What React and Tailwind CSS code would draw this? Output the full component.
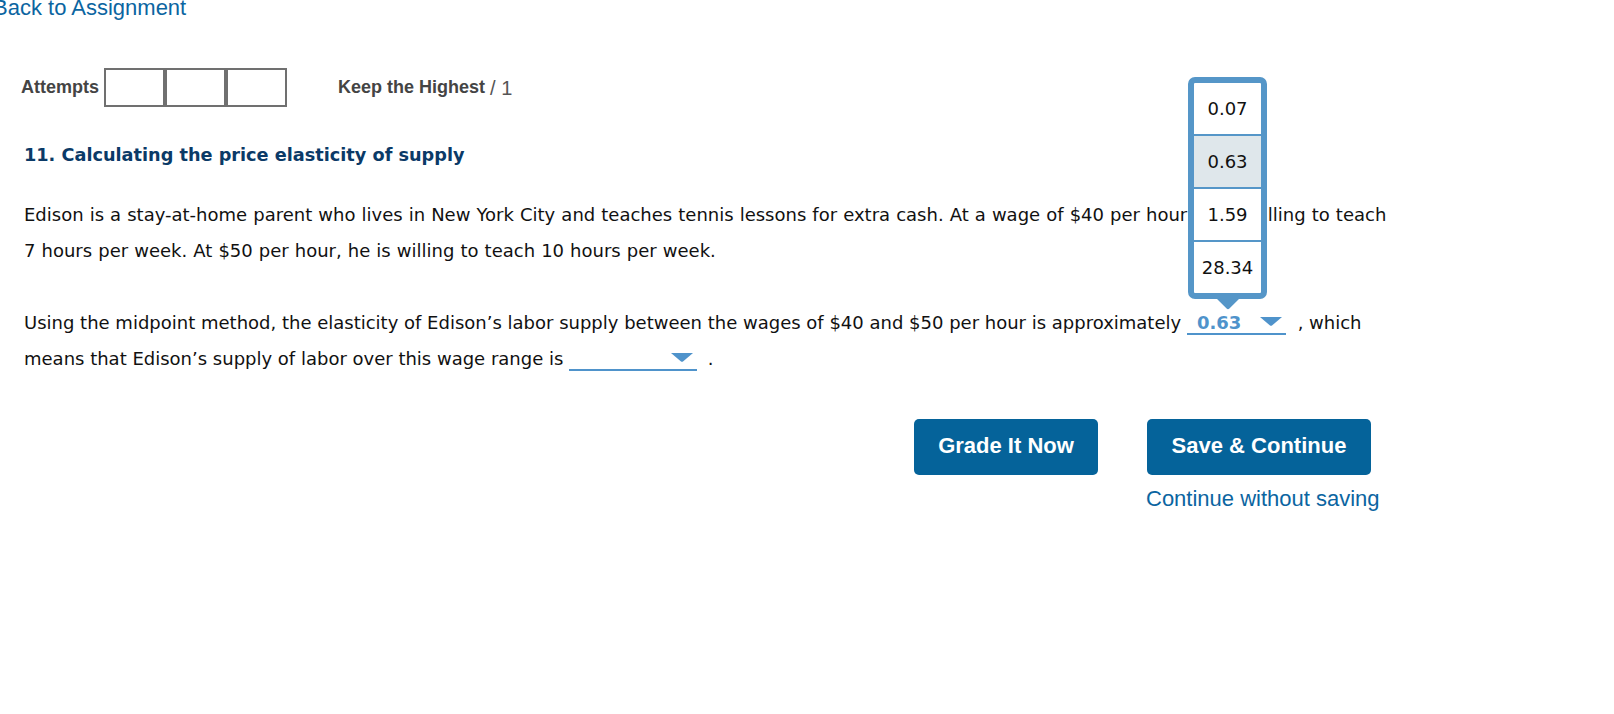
import React from "react";

const sans = "font-['Liberation_Sans',Arial,sans-serif]";
const body = "font-['DejaVu_Sans',Verdana,sans-serif]";

function Arrow() {
  return (
    <svg width="22" height="9" viewBox="0 0 22 9" className="mb-[4px] shrink-0">
      <path d="M0 0 H22 L12 8.4 Q11 9.2 10 8.4 Z" fill="#4f93cb" />
    </svg>
  );
}

function Dropdown({ value, width }) {
  return (
    <span
      className={`inline-flex items-center justify-between ${width} h-[22px] border-b-2 border-[#4f93cb] pl-[10px] pr-[4px] leading-[20px]`}
    >
      <span className="font-bold text-[#4f93cb]">{value || "\u00A0"}</span>
      <Arrow />
    </span>
  );
}

export default function App() {
  const options = ["0.07", "0.63", "1.59", "28.34"];
  return (
    <div className={`relative w-[1614px] h-[714px] overflow-hidden bg-white ${body}`}>
      <a className={`block ml-[-7px] mt-[-4px] text-[22px] leading-[24px] text-[#0b65a1] ${sans}`}>
        Back to Assignment
      </a>

      <div className={`flex items-center mt-[48px] ml-[21px] h-[39px] ${sans} text-[#444]`}>
        <span className="text-[18px] font-bold mr-[5px]">Attempts</span>
        <div className="w-[61px] h-[39px] border-2 border-[#707070]" />
        <div className="w-[61px] h-[39px] border-2 border-[#707070]" />
        <div className="w-[61px] h-[39px] border-2 border-[#707070]" />
        <span className="ml-[51px] text-[18px] font-bold">Keep the Highest</span>
        <span className="ml-[5px] text-[20px] text-[#555]">/ 1</span>
      </div>

      <h2 className="mt-[30px] ml-[24px] text-[17.7px] leading-[36px] font-bold text-[#0b3a67]">
        11. Calculating the price elasticity of supply
      </h2>

      <p className="mt-[24px] ml-[24px] text-[18px] leading-[36px] text-[#111] whitespace-nowrap [word-spacing:0.35px]">
        Edison is a stay-at-home parent who lives in New York City and teaches tennis lessons for extra cash. At a wage of $40 per hour, he is willing to teach
        <br />
        7 hours per week. At $50 per hour, he is willing to teach 10 hours per week.
      </p>

      <p className="mt-[36px] ml-[24px] text-[18px] leading-[36px] text-[#111] whitespace-nowrap">
        Using the midpoint method, the elasticity of Edison’s labor supply between the wages of $40 and $50 per hour is approximately{" "}
        <Dropdown value="0.63" width="w-[99px]" />{" "}
        <span className="ml-[6px]">, which</span>
        <br />
        means that Edison’s supply of labor over this wage range is{" "}
        <Dropdown width="w-[128px]" />{" "}
        <span className="ml-[5px]">.</span>
      </p>

      <div className={`flex mt-[42px] ml-[914px] gap-[49px] ${sans}`}>
        <button className="w-[184px] h-[56px] pb-[3px] rounded-[5px] bg-[#05639a] text-white text-[22px] font-bold flex items-center justify-center">
          Grade It Now
        </button>
        <div className="flex flex-col items-start">
          <button className="w-[224px] h-[56px] pb-[3px] rounded-[5px] bg-[#05639a] text-white text-[22px] font-bold flex items-center justify-center">
            Save &amp; Continue
          </button>
          <a className="mt-[11px] ml-[-1px] text-[22px] leading-[26px] text-[#0b65a1]">
            Continue without saving
          </a>
        </div>
      </div>

      <div className="absolute left-[1188px] top-[77px] w-[79px]">
        <div className="flex flex-col gap-[2px] border-[6px] border-[#5596c8] rounded-[7px] bg-[#5596c8] overflow-hidden">
          {options.map((o, i) => (
            <div
              key={o}
              className={`h-[51px] flex items-center justify-center text-[18px] text-[#111] ${
                i === 1 ? "bg-[#dfe7eb]" : "bg-white"
              }`}
            >
              {o}
            </div>
          ))}
        </div>
        <div className="flex justify-center -mt-[1px]">
          <svg width="24" height="12" viewBox="0 0 24 12">
            <path d="M0 0 H24 L13.4 10.6 Q12 12 10.6 10.6 Z" fill="#5596c8" />
          </svg>
        </div>
      </div>
    </div>
  );
}
